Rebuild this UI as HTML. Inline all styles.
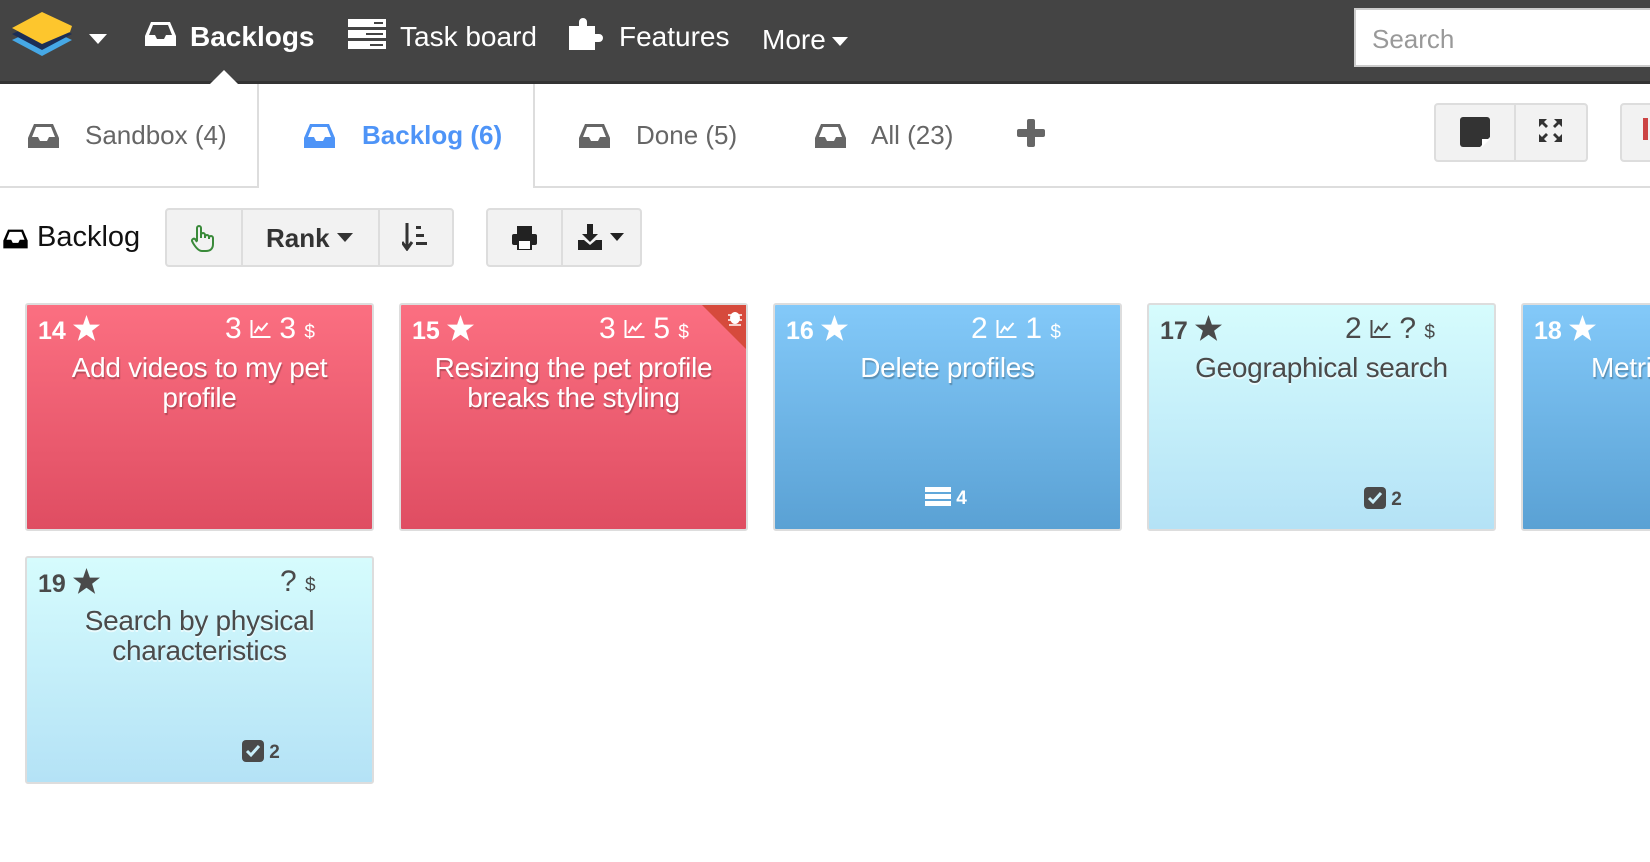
<!DOCTYPE html>
<html><head><meta charset="utf-8">
<style>
*{box-sizing:border-box;margin:0;padding:0}
body{width:1650px;height:862px;background:#fff;font-family:"Liberation Sans",sans-serif;position:relative;overflow:hidden}
.nav{position:absolute;left:0;top:0;width:1650px;height:84px;background:#444;border-bottom:3px solid #333}
.abs{position:absolute}
.nt{position:absolute;color:#fff;font-size:28px;top:21px}
.search{position:absolute;left:1354px;top:8px;width:310px;height:59px;background:#fff;border:2px solid #ccc;color:#999;font-size:26px;padding:14px 0 0 16px}
.tabtxt{position:absolute;top:120px;font-size:26px;color:#666}
.btn{position:absolute;background:#f2f2f2;border:2px solid #ddd;border-radius:4px}
.sep{position:absolute;top:0;bottom:0;width:2px;background:#ddd}
.card{position:absolute;width:349px;height:228px;border:2px solid #ddd;border-radius:3px;font-family:"Liberation Sans Narrow","Liberation Sans",sans-serif}
.red{background:linear-gradient(#fb6f81,#df4d62);color:#fff}
.blue{background:linear-gradient(#83c9f9,#5aa1d4);color:#fff}
.cyan{background:linear-gradient(#d6fcfd,#b4e2f6);color:#4a4a4a}
.num{position:absolute;left:11px;top:10px;font-size:25px;font-weight:bold}
.pts{position:absolute;top:7px;font-size:30px;white-space:nowrap}
.pts small{font-size:19px}
.title{position:absolute;left:0;right:0;top:48px;text-align:center;font-size:28px;line-height:30px;letter-spacing:-0.3px;text-shadow:0 2px 0 rgba(255,255,255,.6)}
.red .title,.blue .title{text-shadow:1px 2px 1px rgba(0,0,0,.25)}
.badge{position:absolute;top:182px;font-size:19px;font-weight:bold;white-space:nowrap}
</style></head><body>
<div class="nav">
 <svg class="abs" style="left:10px;top:12px" width="64" height="46" viewBox="0 0 64 46"><path d="M2 28 L32 14 L62 28 L32 44Z" fill="#46a8e6"/><path d="M2 22 L32 8 L62 22 L32 38Z" fill="#1c2e55"/><path d="M2 16 L32 0 L62 14 L60 20 L32 32Z" fill="#fdc62d"/></svg>
 <svg class="abs" style="left:89px;top:34px" width="18" height="10"><path d="M0 0H18L9 10Z" fill="#fff"/></svg>
 <svg class="abs" style="left:144px;top:20px" width="33" height="28" viewBox="0 0 33 28"><path d="M7 2H26L32 16V26H1V16Z" fill="#fff"/><path d="M5 15H11L13 19H20L22 15H28L24 5H9Z" fill="#444"/></svg>
 <div class="nt" style="left:190px;font-weight:bold">Backlogs</div>
 <svg class="abs" style="left:348px;top:19px" width="38" height="30"><rect x="0" y="0" width="38" height="8" fill="#fff"/><rect x="0" y="11" width="38" height="8" fill="#fff"/><rect x="0" y="22" width="38" height="8" fill="#fff"/><rect x="26" y="3" width="9" height="2" fill="#444"/><rect x="18" y="14" width="17" height="2" fill="#444"/><rect x="22" y="25" width="13" height="2" fill="#444"/></svg>
 <div class="nt" style="left:400px">Task board</div>
 <svg class="abs" style="left:569px;top:16px" width="36" height="34" viewBox="0 0 36 34"><path d="M0 10H10V6A4 4 0 0 1 18 6V10H26V18H30A4 4 0 0 1 30 26H26V34H0Z" fill="#fff"/></svg>
 <div class="nt" style="left:619px">Features</div>
 <div class="nt" style="left:762px;top:24px">More</div>
 <svg class="abs" style="left:832px;top:37px" width="16" height="9"><path d="M0 0H16L8 9Z" fill="#fff"/></svg>
 <div class="search">Search</div>
 <svg class="abs" style="left:210px;top:70px" width="28" height="14"><path d="M0 14L14 0L28 14Z" fill="#fff"/></svg>
</div>
<!-- tabs -->
<div class="abs" style="left:-2px;top:84px;width:261px;height:104px;border:2px solid #ddd;border-top:none;background:#fff"></div>
<div class="abs" style="left:533px;top:84px;width:1200px;height:104px;border-left:2px solid #ddd;border-bottom:2px solid #ddd"></div>
<svg class="abs" style="left:27px;top:122px" width="33" height="28" viewBox="0 0 33 28"><path d="M7 2H26L32 16V26H1V16Z" fill="#666"/><path d="M5 15H11L13 19H20L22 15H28L24 5H9Z" fill="#fff"/></svg>
<div class="tabtxt" style="left:85px">Sandbox (4)</div>
<svg class="abs" style="left:303px;top:122px" width="33" height="28" viewBox="0 0 33 28"><path d="M7 2H26L32 16V26H1V16Z" fill="#4e94f7"/><path d="M5 15H11L13 19H20L22 15H28L24 5H9Z" fill="#fff"/></svg>
<div class="tabtxt" style="left:362px;color:#4e94f7;font-weight:bold">Backlog (6)</div>
<svg class="abs" style="left:578px;top:122px" width="33" height="28" viewBox="0 0 33 28"><path d="M7 2H26L32 16V26H1V16Z" fill="#666"/><path d="M5 15H11L13 19H20L22 15H28L24 5H9Z" fill="#fff"/></svg>
<div class="tabtxt" style="left:636px">Done (5)</div>
<svg class="abs" style="left:814px;top:122px" width="33" height="28" viewBox="0 0 33 28"><path d="M7 2H26L32 16V26H1V16Z" fill="#666"/><path d="M5 15H11L13 19H20L22 15H28L24 5H9Z" fill="#fff"/></svg>
<div class="tabtxt" style="left:871px">All (23)</div>
<svg class="abs" style="left:1017px;top:119px" width="28" height="28"><rect x="10" y="0" width="8" height="28" rx="2" fill="#666"/><rect x="0" y="10" width="28" height="8" rx="2" fill="#666"/></svg>
<div class="btn" style="left:1434px;top:103px;width:154px;height:59px"><div class="sep" style="left:78px"></div></div>
<svg class="abs" style="left:1460px;top:117px" width="30" height="30"><path d="M3 0H27A3 3 0 0 1 30 3V20L20 30H3A3 3 0 0 1 0 27V3A3 3 0 0 1 3 0Z" fill="#333"/><path d="M22 30L30 22H22Z" fill="#fff"/></svg>
<svg class="abs" style="left:1539px;top:119px" width="23" height="23" viewBox="0 0 23 23"><path d="M0 0H8L5 3L9 7L7 9L3 5L0 8Z M23 0V8L20 5L16 9L14 7L18 3L15 0Z M0 23V15L3 18L7 14L9 16L5 20L8 23Z M23 23H15L18 20L14 16L16 14L20 18L23 15Z" fill="#333"/></svg>
<div class="btn" style="left:1620px;top:103px;width:60px;height:59px"></div>
<div class="abs" style="left:1643px;top:118px;width:5px;height:22px;background:#c44"></div>
<!-- toolbar -->
<svg class="abs" style="left:2px;top:228px" width="27" height="22" viewBox="0 0 33 28"><path d="M7 2H26L32 16V26H1V16Z" fill="#000"/><path d="M5 15H11L13 19H20L22 15H28L24 5H9Z" fill="#fff"/></svg>
<div class="abs" style="left:37px;top:221px;font-size:29px;color:#111">Backlog</div>
<div class="btn" style="left:165px;top:208px;width:289px;height:59px"><div class="sep" style="left:74px"></div><div class="sep" style="left:211px"></div></div>
<svg class="abs" style="left:190px;top:225px" width="26" height="28" viewBox="0 0 26 28"><path d="M7 16V3A2 2 0 0 1 11 3V13M11 12V10A2 2 0 0 1 15 10V13M15 12A2 2 0 0 1 19 12V14M19 13A2 2 0 0 1 23 13V19C23 24 20 26 16 26H12C9 26 6 23 3 18L2 16A2 2 0 0 1 5 14L7 17" fill="none" stroke="#3a8a3a" stroke-width="2"/></svg>
<div class="abs" style="left:266px;top:223px;font-size:26px;font-weight:bold;color:#333">Rank</div>
<svg class="abs" style="left:337px;top:233px" width="16" height="9"><path d="M0 0H16L8 9Z" fill="#333"/></svg>
<svg class="abs" style="left:402px;top:223px" width="26" height="28"><path d="M5 0V24M0 19L5 26L10 19" stroke="#333" stroke-width="3" fill="none"/><rect x="14" y="3" width="5" height="3" fill="#333"/><rect x="14" y="11" width="8" height="3" fill="#333"/><rect x="14" y="19" width="11" height="3" fill="#333"/></svg>
<div class="btn" style="left:486px;top:208px;width:156px;height:59px"><div class="sep" style="left:73px"></div></div>
<svg class="abs" style="left:512px;top:226px" width="25" height="24"><rect x="5" y="0" width="15" height="8" fill="#222"/><rect x="0" y="8" width="25" height="11" rx="2" fill="#222"/><rect x="6" y="14" width="13" height="10" fill="#fff" stroke="#222" stroke-width="2"/></svg>
<svg class="abs" style="left:578px;top:224px" width="24" height="26"><path d="M9 0H15V10H20L12 18L4 10H9Z" fill="#222"/><path d="M0 16H6L12 21L18 16H24V26H0Z" fill="#222"/></svg>
<svg class="abs" style="left:610px;top:233px" width="14" height="8"><path d="M0 0H14L7 8Z" fill="#222"/></svg>
<!-- cards -->
<svg width="0" height="0" style="position:absolute"><defs>
<symbol id="star" viewBox="0 0 24 24"><path d="M12 0L15 8.5H24L17 14L19.7 23L12 17.5L4.3 23L7 14L0 8.5H9Z"/></symbol>
<symbol id="chart" viewBox="0 0 20 18"><path d="M1 0V17H20" stroke="currentColor" stroke-width="2" fill="none"/><path d="M4 13L8 7L11 10L17 3" stroke="currentColor" stroke-width="2" fill="none"/></symbol>
<symbol id="chk" viewBox="0 0 22 22"><rect width="22" height="22" rx="4" fill="currentColor"/><path d="M5 11L9 15L17 6" stroke="#c9eef9" stroke-width="3" fill="none"/></symbol>
</defs></svg>

<div class="card red" style="left:25px;top:303px">
 <div class="num">14 <svg width="27" height="27" fill="#fff" style="vertical-align:-3px"><use href="#star"/></svg></div>
 <div class="pts" style="left:198px">3 <svg width="21" height="18" style="color:#fff"><use href="#chart"/></svg> 3 <small>$</small></div>
 <div class="title">Add videos to my pet<br>profile</div>
</div>
<div class="card red" style="left:399px;top:303px">
 <div class="num">15 <svg width="27" height="27" fill="#fff" style="vertical-align:-3px"><use href="#star"/></svg></div>
 <div class="pts" style="left:198px">3 <svg width="21" height="18" style="color:#fff"><use href="#chart"/></svg> 5 <small>$</small></div>
 <svg class="abs" style="right:0;top:0" width="44" height="44"><path d="M0 0H44V44Z" fill="#d64a3c"/><ellipse cx="33" cy="13" rx="5" ry="6" fill="#fff"/><path d="M26 10H40M26 15H40M27 20L39 20" stroke="#fff" stroke-width="1.5"/></svg>
 <div class="title">Resizing the pet profile<br>breaks the styling</div>
</div>
<div class="card blue" style="left:773px;top:303px">
 <div class="num">16 <svg width="27" height="27" fill="#fff" style="vertical-align:-3px"><use href="#star"/></svg></div>
 <div class="pts" style="left:196px">2 <svg width="21" height="18" style="color:#fff"><use href="#chart"/></svg> 1 <small>$</small></div>
 <div class="title">Delete profiles</div>
 <div class="badge" style="left:150px"><svg width="26" height="20" style="vertical-align:-3px"><rect width="26" height="5" fill="#fff"/><rect y="7" width="26" height="5" fill="#fff"/><rect y="14" width="26" height="5" fill="#fff"/></svg> 4</div>
</div>
<div class="card cyan" style="left:1147px;top:303px">
 <div class="num">17 <svg width="27" height="27" fill="#4a4a4a" style="vertical-align:-3px"><use href="#star"/></svg></div>
 <div class="pts" style="left:196px">2 <svg width="21" height="18" style="color:#4a4a4a"><use href="#chart"/></svg> ? <small>$</small></div>
 <div class="title">Geographical search</div>
 <div class="badge" style="left:215px"><svg width="22" height="22" style="color:#4a4a4a;vertical-align:-4px"><use href="#chk"/></svg> 2</div>
</div>
<div class="card blue" style="left:1521px;top:303px">
 <div class="num">18 <svg width="27" height="27" fill="#fff" style="vertical-align:-3px"><use href="#star"/></svg></div>
 <div class="title" style="text-align:left;left:68px">Metrics</div>
</div>
<div class="card cyan" style="left:25px;top:556px">
 <div class="num">19 <svg width="27" height="27" fill="#4a4a4a" style="vertical-align:-3px"><use href="#star"/></svg></div>
 <div class="pts" style="left:253px">? <small>$</small></div>
 <div class="title">Search by physical<br>characteristics</div>
 <div class="badge" style="left:215px"><svg width="22" height="22" style="color:#4a4a4a;vertical-align:-4px"><use href="#chk"/></svg> 2</div>
</div>
</body></html>
